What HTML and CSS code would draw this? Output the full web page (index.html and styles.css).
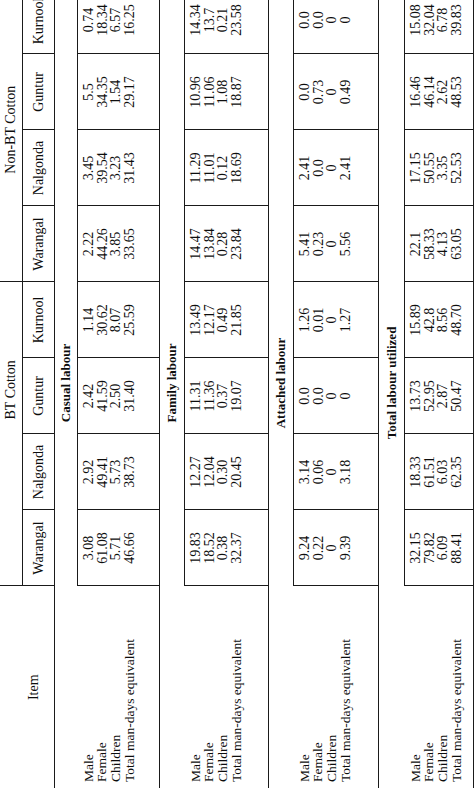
FILE: index.html
```html
<!DOCTYPE html>
<html lang="en">
<head>
<meta charset="utf-8">
<title>Labour utilization table</title>
<link rel="stylesheet" href="styles.css">
</head>
<body>
<div class="stage">
  <div class="rot">
    <table class="tbl">
      <colgroup>
        <col class="c-item">
        <col class="c-d"><col class="c-d"><col class="c-d"><col class="c-d">
        <col class="c-d"><col class="c-d"><col class="c-d"><col class="c-d">
      </colgroup>
      <tr>
        <td class="item-head" rowspan="2">Item</td>
        <td class="grp grp-bt" colspan="4">BT Cotton</td>
        <td class="grp grp-non" colspan="4">Non-BT Cotton</td>
      </tr>
      <tr>
        <td class="dist">Warangal</td>
        <td class="dist">Nalgonda</td>
        <td class="dist">Guntur</td>
        <td class="dist">Kurnool</td>
        <td class="dist">Warangal</td>
        <td class="dist">Nalgonda</td>
        <td class="dist">Guntur</td>
        <td class="dist">Kurnool</td>
      </tr>

      <tr><td class="sec sec-1" colspan="9">Casual labour</td></tr>
      <tr class="data data-1">
        <td class="lbl">Male<br>Female<br>Children<br>Total man-days equivalent</td>
        <td class="num">3.08<br>61.08<br>5.71<br>46.66</td>
        <td class="num">2.92<br>49.41<br>5.73<br>38.73</td>
        <td class="num">2.42<br>41.59<br>2.50<br>31.40</td>
        <td class="num">1.14<br>30.62<br>8.07<br>25.59</td>
        <td class="num">2.22<br>44.26<br>3.85<br>33.65</td>
        <td class="num">3.45<br>39.54<br>3.23<br>31.43</td>
        <td class="num">5.5<br>34.35<br>1.54<br>29.17</td>
        <td class="num">0.74<br>18.34<br>6.57<br>16.25</td>
      </tr>

      <tr><td class="sec sec-2" colspan="9">Family labour</td></tr>
      <tr class="data data-2">
        <td class="lbl">Male<br>Female<br>Children<br>Total man-days equivalent</td>
        <td class="num">19.83<br>18.52<br>0.38<br>32.37</td>
        <td class="num">12.27<br>12.04<br>0.30<br>20.45</td>
        <td class="num">11.31<br>11.36<br>0.37<br>19.07</td>
        <td class="num">13.49<br>12.17<br>0.49<br>21.85</td>
        <td class="num">14.47<br>13.84<br>0.28<br>23.84</td>
        <td class="num">11.29<br>11.01<br>0.12<br>18.69</td>
        <td class="num">10.96<br>11.06<br>1.08<br>18.87</td>
        <td class="num">14.34<br>13.7<br>0.21<br>23.58</td>
      </tr>

      <tr><td class="sec sec-3" colspan="9">Attached labour</td></tr>
      <tr class="data data-3">
        <td class="lbl">Male<br>Female<br>Children<br>Total man-days equivalent</td>
        <td class="num">9.24<br>0.22<br>0<br>9.39</td>
        <td class="num">3.14<br>0.06<br>0<br>3.18</td>
        <td class="num">0.0<br>0.0<br>0<br>0</td>
        <td class="num">1.26<br>0.01<br>0<br>1.27</td>
        <td class="num">5.41<br>0.23<br>0<br>5.56</td>
        <td class="num">2.41<br>0.0<br>0<br>2.41</td>
        <td class="num">0.0<br>0.73<br>0<br>0.49</td>
        <td class="num">0.0<br>0.0<br>0<br>0</td>
      </tr>

      <tr><td class="sec sec-4" colspan="9">Total labour utilized</td></tr>
      <tr class="data data-4">
        <td class="lbl">Male<br>Female<br>Children<br>Total man-days equivalent</td>
        <td class="num">32.15<br>79.82<br>6.09<br>88.41</td>
        <td class="num">18.33<br>61.51<br>6.03<br>62.35</td>
        <td class="num">13.73<br>52.95<br>2.87<br>50.47</td>
        <td class="num">15.89<br>42.8<br>8.56<br>48.70</td>
        <td class="num">22.1<br>58.33<br>4.13<br>63.05</td>
        <td class="num">17.15<br>50.55<br>3.35<br>52.53</td>
        <td class="num">16.46<br>46.14<br>2.62<br>48.53</td>
        <td class="num">15.08<br>32.04<br>6.78<br>39.83</td>
      </tr>
    </table>
  </div>
</div>
</body>
</html>
```

FILE: styles.css
```css
html, body {
  margin: 0;
  padding: 0;
  background: #ffffff;
  overflow: hidden;
}

.stage {
  width: 474px;
  height: 788px;
  overflow: hidden;
  background: #ffffff;
}

.rot {
  width: 788px;
  height: 474px;
  transform-origin: 0 0;
  transform: translateY(788px) rotate(-90deg);
}

.tbl {
  border-collapse: collapse;
  table-layout: fixed;
  width: 810px;
  margin: -6px 0 0 -6px;
  font-family: "Liberation Serif", "Times New Roman", serif;
  font-size: 14px;
  line-height: 13.7px;
  color: #0d0d0d;
}

.tbl td {
  padding: 0;
  border: 0 solid #1a1a1a;
}

.c-item { width: 202px; }
.c-d { width: 76px; }

.item-head {
  border-right-width: 1.5px !important;
  border-bottom-width: 1.5px !important;
  text-align: center;
  vertical-align: bottom;
  padding-bottom: 13px !important;
}

.grp {
  height: 22px;
  border-bottom-width: 1.5px !important;
  vertical-align: middle;
  white-space: nowrap;
}

.grp-bt {
  border-right-width: 1.5px !important;
  text-align: left;
  padding-left: 166px !important;
}

.grp-non {
  text-align: center;
}

.dist {
  height: 31px;
  text-align: center;
  vertical-align: middle;
  border-right-width: 1.5px !important;
  border-bottom-width: 1.5px !important;
  white-space: nowrap;
}

.dist:last-child {
  padding-right: 10px !important;
}

.sec {
  text-align: center;
  vertical-align: middle;
  font-weight: bold;
  font-size: 13px;
}

.sec-1 { height: 22px; }
.sec-2 { height: 24px; }
.sec-3 { height: 24px; }
.sec-4 { height: 25px; }

.lbl,
.num {
  vertical-align: top;
  padding-top: 4px !important;
  border-right-width: 1.5px !important;
  border-bottom-width: 1.5px !important;
  white-space: nowrap;
}

.num {
  text-align: center;
  border-top-width: 1.5px !important;
}

.num:last-child {
  padding-right: 8px !important;
}

.lbl {
  text-align: left;
  padding-left: 6px !important;
  font-size: 13.5px;
}

.data-1 td { height: 77px; }
.data-2 td { height: 79px; }
.data-3 td { height: 80px; }
.data-4 td { height: 64px; }
```
